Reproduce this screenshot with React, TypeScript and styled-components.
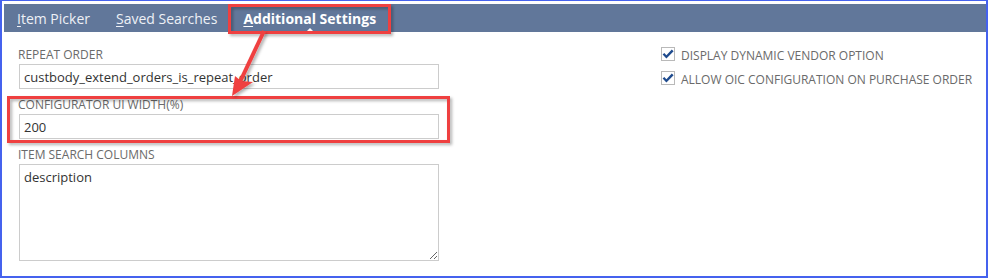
import React from 'react';
import styled, { createGlobalStyle } from 'styled-components';

const GlobalStyle = createGlobalStyle`
    html, body {
        margin: 0;
        padding: 0;
        background: #ffffff;
    }
    body {
        font-family: 'Open Sans', 'Liberation Sans', Arial, sans-serif;
    }
`;

const Frame = styled.div`
    position: relative;
    box-sizing: border-box;
    width: 988px;
    height: 278px;
    border-style: solid;
    border-color: #4562ee;
    border-width: 1px 2px 2px 2px;
    padding: 3px 0 0 2px;
    background: #ffffff;
    overflow: hidden;
`;

const TabBar = styled.nav`
    display: flex;
    align-items: stretch;
    height: 28px;
    background: #61779a;
`;

const Tab = styled.div<{ $active?: boolean }>`
    position: relative;
    display: flex;
    align-items: center;
    padding: 0 13px;
    font-size: 14px;
    font-weight: ${(p) => (p.$active ? 700 : 400)};
    color: ${(p) => (p.$active ? '#ffffff' : '#eef1f6')};
    white-space: nowrap;

    u {
        text-decoration-thickness: 1px;
        text-underline-offset: 2px;
    }

    &::after {
        content: '';
        display: ${(p) => (p.$active ? 'block' : 'none')};
        position: absolute;
        left: 50%;
        bottom: 0;
        margin-left: -4px;
        border-left: 4px solid transparent;
        border-right: 4px solid transparent;
        border-bottom: 4px solid #ffffff;
    }
`;

const Content = styled.div`
    display: grid;
    grid-template-columns: 420px 1fr;
    column-gap: 222px;
    padding: 0 0 0 15px;
`;

const LeftColumn = styled.div`
    display: flex;
    flex-direction: column;
    gap: 8px;
    padding-top: 15px;
`;

const RightColumn = styled.div`
    display: flex;
    flex-direction: column;
    padding-top: 11px;
`;

const Field = styled.div`
    display: flex;
    flex-direction: column;
`;

const Label = styled.label`
    font-size: 12px;
    line-height: 16px;
    color: #6a6a6a;
    text-transform: uppercase;
    margin: 0 0 1px -1px;
`;

const TextInput = styled.input`
    box-sizing: border-box;
    width: 420px;
    height: 25px;
    margin: 0;
    padding: 0 4px;
    border: 1px solid #cccccc;
    border-radius: 0;
    font-family: 'Open Sans', 'Liberation Sans', Arial, sans-serif;
    font-size: 13px;
    color: #333333;
    outline: none;
`;

const TextArea = styled.textarea`
    box-sizing: border-box;
    width: 420px;
    height: 97px;
    margin: 0;
    padding: 3px 4px;
    border: 1px solid #cccccc;
    border-radius: 0;
    font-family: 'Open Sans', 'Liberation Sans', Arial, sans-serif;
    font-size: 13px;
    line-height: 18px;
    color: #333333;
    resize: both;
    outline: none;
`;

const CheckRow = styled.div`
    display: flex;
    align-items: center;
    gap: 6px;
    height: 24px;
    font-size: 12px;
    color: #6a6a6a;
    text-transform: uppercase;
`;

const CheckBox = styled.span`
    box-sizing: border-box;
    width: 14px;
    height: 14px;
    border: 1px solid #b9b9b9;
    background: #ffffff;
    display: flex;
    align-items: center;
    justify-content: center;
    margin-top: -2px;
`;

const Overlay = styled.svg`
    position: absolute;
    left: -1px;
    top: -1px;
    pointer-events: none;
`;

function Check(): React.ReactElement {
    return (
        <CheckBox>
            <svg width="12" height="11" viewBox="0 0 12 11">
                <path d="M0.6 5.6 L4.4 9.6 L11.6 2.2 L9.8 0.6 L4.4 6.2 L2.3 4 Z" fill="#1f4b8e" />
            </svg>
        </CheckBox>
    );
}

function App(): React.ReactElement {
    return (
        <Frame>
            <GlobalStyle />
            <TabBar>
                <Tab>
                    <span>
                        <u>I</u>tem Picker
                    </span>
                </Tab>
                <Tab>
                    <span>
                        <u>S</u>aved Searches
                    </span>
                </Tab>
                <Tab $active>
                    <span>
                        <u>A</u>dditional Settings
                    </span>
                </Tab>
            </TabBar>

            <Content>
                <LeftColumn>
                    <Field>
                        <Label>Repeat Order</Label>
                        <TextInput defaultValue="custbody_extend_orders_is_repeat_order" />
                    </Field>
                    <Field>
                        <Label>Configurator UI Width(%)</Label>
                        <TextInput defaultValue="200" />
                    </Field>
                    <Field>
                        <Label>Item Search Columns</Label>
                        <TextArea defaultValue="description" />
                    </Field>
                </LeftColumn>

                <RightColumn>
                    <CheckRow>
                        <Check />
                        <span>Display Dynamic Vendor Option</span>
                    </CheckRow>
                    <CheckRow>
                        <Check />
                        <span>Allow OIC Configuration on Purchase Order</span>
                    </CheckRow>
                </RightColumn>
            </Content>

            {/* red callouts drawn over the screenshot */}
            <Overlay width="988" height="278" viewBox="0 0 988 278">
                <defs>
                    <filter id="shade" x="-10%" y="-10%" width="130%" height="130%">
                        <feDropShadow dx="2" dy="2" stdDeviation="1.5" floodColor="#000" floodOpacity="0.3" />
                    </filter>
                </defs>
                <g filter="url(#shade)" fill="none" stroke="#ef4040" strokeWidth="3">
                    <rect x="228.5" y="5.5" width="160" height="27" />
                    <rect x="7.5" y="97.5" width="440" height="44" />
                </g>
                <g filter="url(#shade)">
                    <line x1="263" y1="31" x2="238" y2="84" stroke="#ef4040" strokeWidth="4" />
                    <path d="M231 96 L234 76 L240 81 L252 82 Z" fill="#ef4040" />
                </g>
            </Overlay>
        </Frame>
    );
}

export default App;
